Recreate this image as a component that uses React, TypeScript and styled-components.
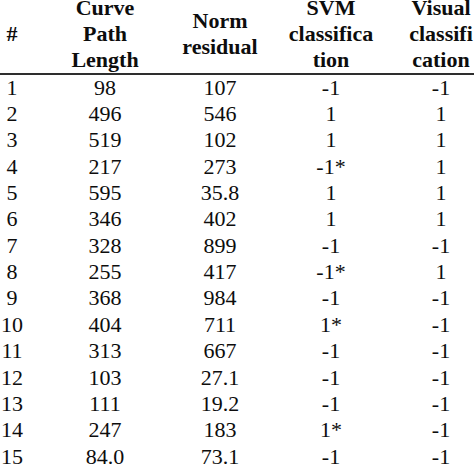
import React from "react"
import styled, { createGlobalStyle } from "styled-components"

const GlobalStyle = createGlobalStyle`
  html, body {
    margin: 0;
    padding: 0;
    background: #ffffff;
    overflow: hidden;
  }
  body {
    font-family: "Liberation Serif", "Times New Roman", serif;
    color: #0d0d0d;
  }
`

const columns = [
  { key: "id", head: ["#"] },
  { key: "length", head: ["Curve", "Path", "Length"] },
  { key: "residual", head: ["Norm", "residual"] },
  { key: "svm", head: ["SVM", "classifica", "tion"] },
  { key: "visual", head: ["Visual", "classifi", "cation"] },
]

const rows = [
  ["1", "98", "107", "-1", "-1"],
  ["2", "496", "546", "1", "1"],
  ["3", "519", "102", "1", "1"],
  ["4", "217", "273", "-1*", "1"],
  ["5", "595", "35.8", "1", "1"],
  ["6", "346", "402", "1", "1"],
  ["7", "328", "899", "-1", "-1"],
  ["8", "255", "417", "-1*", "1"],
  ["9", "368", "984", "-1", "-1"],
  ["10", "404", "711", "1*", "-1"],
  ["11", "313", "667", "-1", "-1"],
  ["12", "103", "27.1", "-1", "-1"],
  ["13", "111", "19.2", "-1", "-1"],
  ["14", "247", "183", "1*", "-1"],
  ["15", "84.0", "73.1", "-1", "-1"],
]

const App = () => {
  return (
    <>
      <GlobalStyle />
      <Table>
        {columns.map((col) => (
          <HeadCell key={col.key}>
            {col.head.map((line) => (
              <HeadLine key={line}>{line}</HeadLine>
            ))}
          </HeadCell>
        ))}
        {rows.map((row) =>
          row.map((value, i) => <Cell key={row[0] + "-" + i}>{value}</Cell>)
        )}
      </Table>
    </>
  )
}

const Table = styled.div`
  display: grid;
  grid-template-columns: 24px 162px 68px 154px 66px;
  width: 474px;
  margin-top: -5.4px;
  font-size: 22px;
`

const HeadCell = styled.div`
  display: flex;
  flex-direction: column;
  justify-content: center;
  align-items: center;
  height: 78px;
  border-bottom: 2px solid #2e2e2e;
  font-weight: 700;
  line-height: 26px;
`

const HeadLine = styled.span`
  white-space: nowrap;
`

const Cell = styled.div`
  display: flex;
  justify-content: center;
  height: 26.36px;
  line-height: 26.36px;
  white-space: nowrap;
`

export default App
